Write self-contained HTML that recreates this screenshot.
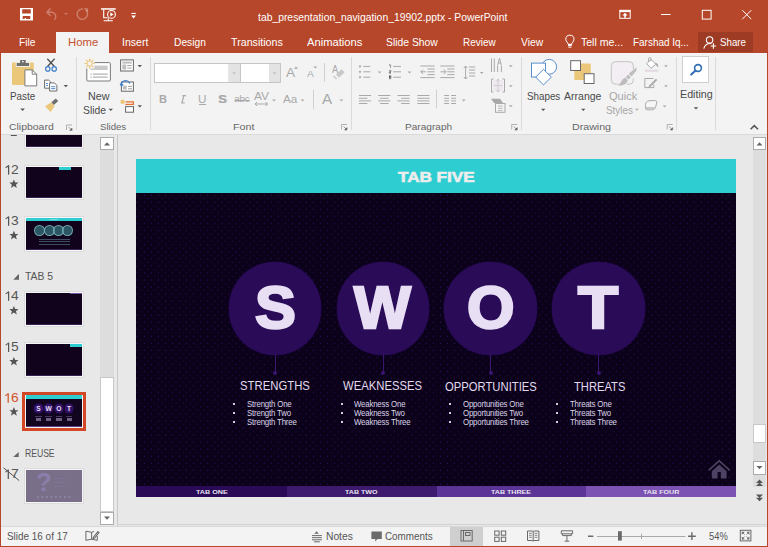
<!DOCTYPE html>
<html><head><meta charset="utf-8">
<style>
*{margin:0;padding:0;box-sizing:border-box}
html,body{width:768px;height:547px;overflow:hidden;background:#B7472A;font-family:"Liberation Sans",sans-serif;position:relative}
.a{position:absolute}
.t{position:absolute;white-space:nowrap;font-family:"Liberation Sans",sans-serif}
svg{overflow:visible}

</style></head><body>
<div class="a" style="left:0px;top:0px;width:768px;height:53px;background:#B7472A"></div>
<div class="a" style="left:1px;top:53px;width:766px;height:81px;background:#F3F3F3"></div>
<div class="a" style="left:1px;top:134px;width:766px;height:1px;background:#DADADA"></div>
<div class="a" style="left:1px;top:135px;width:766px;height:391px;background:#E8E8E8"></div>
<div class="a" style="left:1px;top:526px;width:766px;height:1px;background:#D8D8D8"></div>
<div class="a" style="left:1px;top:527px;width:766px;height:19px;background:#F3F3F3"></div>
<span class="t" style="left:257.79px;top:12.87px;font-size:10.2px;line-height:10.2px;color:#FFFFFF;font-weight:400;letter-spacing:0px;transform:scaleX(1.0166);transform-origin:0 0;">tab_presentation_navigation_19902.pptx - PowerPoint</span>
<div class="a" style="left:56px;top:32px;width:53px;height:22px;background:#F3F3F3"></div>
<span class="t" style="left:18.59px;top:37.03px;font-size:11.3px;line-height:11.3px;color:#FFFFFF;font-weight:400;letter-spacing:0px;transform:scaleX(0.9018);transform-origin:0 0;">File</span>
<span class="t" style="left:67.55px;top:37.03px;font-size:11.3px;line-height:11.3px;color:#C4502F;font-weight:400;letter-spacing:0px;transform:scaleX(1.0022);transform-origin:0 0;">Home</span>
<span class="t" style="left:122.08px;top:37.03px;font-size:11.3px;line-height:11.3px;color:#FFFFFF;font-weight:400;letter-spacing:0px;transform:scaleX(0.9320);transform-origin:0 0;">Insert</span>
<span class="t" style="left:173.59px;top:37.03px;font-size:11.3px;line-height:11.3px;color:#FFFFFF;font-weight:400;letter-spacing:0px;transform:scaleX(0.9046);transform-origin:0 0;">Design</span>
<span class="t" style="left:230.57px;top:37.03px;font-size:11.3px;line-height:11.3px;color:#FFFFFF;font-weight:400;letter-spacing:0px;transform:scaleX(0.9455);transform-origin:0 0;">Transitions</span>
<span class="t" style="left:306.75px;top:37.03px;font-size:11.3px;line-height:11.3px;color:#FFFFFF;font-weight:400;letter-spacing:0px;transform:scaleX(0.9912);transform-origin:0 0;">Animations</span>
<span class="t" style="left:386.49px;top:37.03px;font-size:11.3px;line-height:11.3px;color:#FFFFFF;font-weight:400;letter-spacing:0px;transform:scaleX(0.9168);transform-origin:0 0;">Slide Show</span>
<span class="t" style="left:463.10px;top:37.03px;font-size:11.3px;line-height:11.3px;color:#FFFFFF;font-weight:400;letter-spacing:0px;transform:scaleX(0.8798);transform-origin:0 0;">Review</span>
<span class="t" style="left:520.59px;top:37.03px;font-size:11.3px;line-height:11.3px;color:#FFFFFF;font-weight:400;letter-spacing:0px;transform:scaleX(0.9105);transform-origin:0 0;">View</span>
<span class="t" style="left:580.58px;top:37.03px;font-size:11.3px;line-height:11.3px;color:#FFFFFF;font-weight:400;letter-spacing:0px;transform:scaleX(0.9323);transform-origin:0 0;">Tell me...</span>
<span class="t" style="left:633.30px;top:37.03px;font-size:11.3px;line-height:11.3px;color:#FFFFFF;font-weight:400;letter-spacing:0px;transform:scaleX(0.8797);transform-origin:0 0;">Farshad Iq...</span>
<div class="a" style="left:698px;top:32px;width:55px;height:20px;background:#9E3B24"></div>
<span class="t" style="left:720.41px;top:37.03px;font-size:11.3px;line-height:11.3px;color:#FFFFFF;font-weight:400;letter-spacing:0px;transform:scaleX(0.8615);transform-origin:0 0;">Share</span>
<svg class="a" style="left:0;top:0" width="768" height="53" viewBox="0 0 768 53"><path fill="#fff" fill-rule="evenodd" d="M20 8H33V20.5H20Z M22.2 9.2V13.4H30.8V9.2Z M22.7 15.9V19H30.3V15.9Z"/><rect x="24.7" y="18" width="1.4" height="1" fill="#fff"/><g stroke="#fff" stroke-opacity="0.3" stroke-width="1.5" fill="none" stroke-linecap="round"><path d="M46.8 12.2L50.2 8.9M46.8 12.2L50.2 15.5M46.8 12.2H52.2A4.6 4.4 0 0 1 54.8 19.2"/><path d="M82.4 8.9A5.2 5.2 0 1 0 86.2 10.6"/></g><path fill="#fff" fill-opacity="0.3" d="M64 13H67.8L65.9 15Z"/><path fill="#fff" fill-opacity="0.3" d="M83.5 8.2H88.2V12.6Z"/><rect x="101" y="8.2" width="14.7" height="1.5" fill="#fff"/><g stroke="#fff" stroke-width="1.1" fill="none"><path d="M103.7 9.5V17.8H107.5"/><circle cx="111.5" cy="14.4" r="3.9"/><path d="M108.3 18.3V20.5M103.7 20.7H112.8"/></g><path fill="#fff" d="M110.3 12.3L113.6 14.4L110.3 16.5Z"/><rect x="131.4" y="12.9" width="4.4" height="1.1" fill="#fff"/><path fill="#fff" d="M131.2 15.4H136L133.6 18.4Z"/><g stroke="#fff" stroke-width="1" fill="none"><rect x="619.8" y="10.3" width="10.4" height="8"/><path d="M661 14.5H670.5"/><rect x="702.3" y="10.3" width="8.8" height="8.8"/><path d="M742.3 10.2L751.3 19.2M751.3 10.2L742.3 19.2"/></g><rect x="619.8" y="10.3" width="10.4" height="1.8" fill="#fff"/><path fill="#fff" d="M625 12.8L627.6 15.4H625.8V17.8H624.2V15.4H622.4Z"/><g stroke="#fff" stroke-width="1" fill="none"><path d="M568.2 44.3C568.2 42.6 565.8 41.7 565.8 39.3A4.1 4.1 0 0 1 574 39.3C574 41.7 571.6 42.6 571.6 44.3Z"/><path d="M568.3 47.1H571.5"/></g><rect x="568" y="44" width="3.8" height="1.9" fill="#fff"/><g stroke="#fff" stroke-width="1.1" fill="none"><circle cx="709.6" cy="39.9" r="3.2"/><path d="M703.8 48.6A6.3 6.3 0 0 1 711.2 43.6"/><path d="M713.4 43.3V48.7M710.7 46H716.1"/></g></svg>
<svg class="a" style="left:0;top:0" width="768" height="140" viewBox="0 0 768 140"><rect x="12" y="62.5" width="21.8" height="22.4" rx="1.2" fill="#EBC77A"/><path fill="#F3F3F3" d="M15.7 62.5H30.1V66.9H15.7Z"/><path fill="#6E6E6E" d="M16.7 63.1H29.1V65.9H16.7Z M20.1 60H25.7V63.2H20.1Z"/><circle cx="22.9" cy="61.6" r="0.9" fill="#F3F3F3"/><path fill="#fff" stroke="#7A7A7A" stroke-width="1" d="M24.9 69.9H32.2L36.7 74.2V85.9H24.9Z"/><path fill="none" stroke="#7A7A7A" stroke-width="1" d="M32.2 69.9V74.2H36.7"/><path fill="#555" d="M20.3 108.6H24.900000000000002L22.6 111.0Z"/><path stroke="#505050" stroke-width="1.3" d="M47.3 58.8L54.6 66.8M54.6 58.8L47.3 66.8"/><g fill="none" stroke="#3E7EC8" stroke-width="1.2"><circle cx="47.8" cy="68.9" r="2.2"/><circle cx="54.2" cy="68.9" r="2.2"/></g><path fill="#fff" stroke="#6A6A6A" stroke-width="1" d="M44.6 80.1H48.6L50.6 82V88.2H44.6Z"/><path fill="#fff" stroke="#6A6A6A" stroke-width="1" d="M49.6 82.9H54.4L56.9 85.4V91H49.6Z"/><g stroke="#3E7EC8" stroke-width="0.9"><path d="M46 83.5H48M46 85.5H48M51.2 86.7H55.3M51.2 88.6H55.3"/></g><path fill="#555" d="M63.599999999999994 84.9H68.0L65.8 87.2Z"/><path fill="#6E6E6E" d="M51.3 102.3L55.8 98.4L58.2 100.9L53.9 104.9Z"/><path fill="#EBC77A" d="M45 106.2L51.1 102.6L54.6 106.2L50.6 112Z"/><path fill="none" stroke="#A0A0A0" stroke-width="0.8" d="M66.5 130V125H72.0"/><path stroke="#909090" stroke-width="0.9" d="M68.5 127L72.0 130.5M72.0 128V130.5H69.5"/><path fill="none" stroke="#A0A0A0" stroke-width="0.8" d="M341.5 129.5V124.5H347.0"/><path stroke="#909090" stroke-width="0.9" d="M343.5 126.5L347.0 130.0M347.0 127.5V130.0H344.5"/><path fill="none" stroke="#A0A0A0" stroke-width="0.8" d="M511.7 129.5V124.5H517.2"/><path stroke="#909090" stroke-width="0.9" d="M513.7 126.5L517.2 130.0M517.2 127.5V130.0H514.7"/><path fill="none" stroke="#A0A0A0" stroke-width="0.8" d="M667.2 129.5V124.5H672.7"/><path stroke="#909090" stroke-width="0.9" d="M669.2 126.5L672.7 130.0M672.7 127.5V130.0H670.2"/><rect x="86.8" y="62.6" width="23.6" height="18.4" rx="1" fill="#fff" stroke="#7A7A7A" stroke-width="1"/><rect x="90.4" y="65.6" width="17.3" height="4.4" fill="#C9C9C9"/><path stroke="#8A8A8A" stroke-width="0.8" d="M90.4 74.1H91.8M93 74.1H107.7M90.4 77.1H91.8M93 77.1H107.7"/><rect x="84.5" y="58.5" width="10" height="10" fill="#F3F3F3"/><g stroke="#EBC77A" stroke-width="1.2"><path d="M89.6 58.4V68.6M84.5 63.5H94.7M86 59.9L93.2 67.1M93.2 59.9L86 67.1"/></g><circle cx="89.6" cy="63.5" r="2.6" fill="#F3F3F3"/><circle cx="89.6" cy="63.5" r="2.6" fill="none" stroke="#EBC77A" stroke-width="1"/><path fill="#555" d="M108.6 108.7H113.0L110.8 111.0Z"/><rect x="120.6" y="59.9" width="12.8" height="11.1" fill="#fff" stroke="#666" stroke-width="1"/><rect x="122.3" y="61.6" width="9.4" height="2" fill="#BDBDBD"/><rect x="122.3" y="64.5" width="3.8" height="5" fill="#BDBDBD"/><path stroke="#888" stroke-width="0.8" d="M127.2 65.5H131.7M127.2 68H131.7"/><path fill="#555" d="M137.60000000000002 64.9H142.0L139.8 67.2Z"/><rect x="121.4" y="82" width="12" height="9.2" fill="#fff" stroke="#666" stroke-width="1"/><rect x="122.9" y="85.6" width="3.8" height="4" fill="#BDBDBD"/><path stroke="#888" stroke-width="0.8" d="M128 86.4H132M128 88.8H132"/><path fill="none" stroke="#3E7EC8" stroke-width="1.3" d="M121.4 85.6A4.3 3.8 0 0 1 129.8 83.6"/><path fill="#3E7EC8" d="M119.6 83.6L123.6 84.1L121.5 87.2Z"/><circle cx="122.6" cy="101.7" r="2.3" fill="#EBC77A"/><path fill="none" stroke="#E5732A" stroke-width="1.2" d="M125.6 101.8H133.4V104.4"/><path stroke="#E5732A" stroke-width="1.2" d="M125.3 104.4H133.9"/><rect x="125.6" y="106.6" width="7.9" height="5.6" fill="#fff" stroke="#666" stroke-width="1"/><path fill="#555" d="M137.60000000000002 105.2H142.0L139.8 107.5Z"/><rect x="154.5" y="63.5" width="86" height="19" fill="#fff" stroke="#C6C6C6" stroke-width="1"/><rect x="228.2" y="64" width="11.8" height="18" fill="#E3E3E3"/><rect x="240.5" y="63.5" width="40" height="19" fill="#fff" stroke="#C6C6C6" stroke-width="1"/><rect x="269" y="64" width="11" height="18" fill="#E3E3E3"/><path fill="#B8B8B8" d="M232.29999999999998 72.4H235.9L234.1 74.30000000000001Z"/><path fill="#B8B8B8" d="M272.7 72.4H276.3L274.5 74.30000000000001Z"/><path stroke="#D0D0D0" stroke-width="1" d="M324.5 63V81.7M313.5 89.7V109.2M436.5 89.7V108.5"/><path fill="#A9A9A9" d="M293.9 68.8L296 66.4L298.1 68.8Z M313.3 66.4H317.4L315.35 68.6Z"/><path fill="#C8C8C8" d="M336 74.5L341.5 69.2L344.6 72.3L339.1 77.6Z"/><path stroke="#C8C8C8" stroke-width="1.4" d="M333.6 75.9L336.6 78.9"/><g fill="#A9A9A9"><circle cx="360" cy="66.4" r="1.1"/><circle cx="360" cy="71.8" r="1.1"/><circle cx="360" cy="77.2" r="1.1"/></g><g stroke="#A9A9A9" stroke-width="1"><path d="M363.3 66.4H370.3M363.3 71.8H370.3M363.3 77.2H370.3"/><path d="M393.2 66.4H401M393.2 71.8H401M393.2 77.2H401"/><path d="M389.4 64.8H390.6V68M389.2 70.3H391V71.8H389.2V73.3H391M389.2 75.6H391V78.8H389.2M389.4 77.2H391"/><path d="M420.3 66H434.7M427.5 69H434.7M427.5 71.8H434.7M427.5 74.6H434.7M420.3 77.6H434.7M420.8 71.8H426M420.8 71.8L423 69.6M420.8 71.8L423 74"/><path d="M440.3 66H454.5M447.3 69H454.5M447.3 71.8H454.5M447.3 74.6H454.5M440.3 77.6H454.5M440.5 71.8H446M446 71.8L443.8 69.6M446 71.8L443.8 74"/><path d="M469 67H475.2M469 70H475.2M469 73H475.2M469 76H475.2M465.6 66V79M465.6 66L463.8 68M465.6 66L467.4 68M465.6 79L463.8 77M465.6 79L467.4 77"/></g><path fill="#A9A9A9" d="M377.70000000000005 71.6H381.5L379.6 73.6Z"/><path fill="#A9A9A9" d="M407.6 71.6H411.4L409.5 73.6Z"/><path fill="#A9A9A9" d="M479.8 72H483.59999999999997L481.7 74Z"/><path stroke="#A9A9A9" stroke-width="1" d="M358.9 95.5H371.1M358.9 98.3H367.4M358.9 100.9H371.1M358.9 103.5H367.4"/><path stroke="#A9A9A9" stroke-width="1" d="M378.2 95.5H390.4M380.1 98.3H388.6M378.2 100.9H390.4M380.1 103.5H388.6"/><path stroke="#A9A9A9" stroke-width="1" d="M397.5 95.5H409.7M401.2 98.3H409.7M397.5 100.9H409.7M401.2 103.5H409.7"/><path stroke="#A9A9A9" stroke-width="1" d="M417.3 95.5H429.5M417.3 98.3H429.5M417.3 100.9H429.5M417.3 103.5H429.5"/><path stroke="#A9A9A9" stroke-width="1" d="M444.2 95.5H449M444.2 98.3H449M444.2 100.9H449M444.2 103.5H449M451.2 95.5H456M451.2 98.3H456M451.2 100.9H456M451.2 103.5H456"/><path fill="#A9A9A9" d="M461.8 99.6H465.59999999999997L463.7 101.6Z"/><g stroke="#A9A9A9" stroke-width="1" fill="none"><path d="M491.5 58.5V72M494.3 58.5V72M497.6 66V72M501.4 66V72"/><path d="M497.6 65.5L499.5 58.2L501.4 65.5M498.2 63H500.8"/><path d="M491.5 79H493.5M491.5 79V92M491.5 92H493.5M504.5 79H502.5M504.5 79V92M504.5 92H502.5"/><path d="M498 79.5V91.5M496 81.5L498 79.5L500 81.5M496 89.5L498 91.5L500 89.5M494 85.5H502"/></g><rect x="493" y="80" width="10" height="11" fill="#EDE4EC" opacity="0.6"/><path fill="#A9A9A9" d="M491 98.7H500L503 103H494Z"/><rect x="495.5" y="103.5" width="9.5" height="8.8" fill="#F4F4F4" stroke="#A9A9A9" stroke-width="1"/><path stroke="#A9A9A9" stroke-width="0.8" d="M498 106H502.5M498 108.3H502.5M498 110.5H502.5"/><path fill="#A9A9A9" d="M508.90000000000003 65.2H512.7L510.8 67.2Z"/><path fill="#A9A9A9" d="M508.90000000000003 85.2H512.7L510.8 87.2Z"/><path fill="#A9A9A9" d="M508.90000000000003 105.3H512.7L510.8 107.3Z"/><circle cx="549.2" cy="66.8" r="7.4" fill="#fff" stroke="#5A8ECB" stroke-width="1"/><rect x="531.5" y="63.1" width="14" height="13.9" fill="#fff" stroke="#5A8ECB" stroke-width="1"/><path fill="#fff" stroke="#5A8ECB" stroke-width="1" d="M543.5 69.3L551.3 77.1L543.5 84.9L535.7 77.1Z"/><path fill="#555" d="M541.0 108.8H545.4000000000001L543.2 111.1Z"/><rect x="574.3" y="63.5" width="16.5" height="16.5" fill="#EBC77A"/><rect x="570.7" y="60.7" width="9.8" height="9.8" fill="#fff" stroke="#666" stroke-width="1"/><rect x="584.2" y="73.7" width="9.8" height="9.8" fill="#fff" stroke="#666" stroke-width="1"/><path fill="#555" d="M581.0999999999999 108.8H585.5L583.3 111.1Z"/><rect x="611.3" y="61.7" width="22" height="22.5" rx="4" fill="#F3EEF3" stroke="#C4C4C4" stroke-width="1"/><path fill="#F3F3F3" d="M616 86.5L636.5 66V86.5Z" opacity="0.9"/><path fill="#BDBDBD" d="M636.5 67.2V70.5L631.5 76.5L628.8 73.8Z M628.2 74.5L630.8 77.2L628.5 79.6L625.8 76.9Z M625.2 77.5L627.9 80.2Q626.5 84.5 621.5 85.5H617.6Q619.5 85 621 81.8Q622.3 78.8 625.2 77.5Z"/><path fill="none" stroke="#C4C4C4" stroke-width="1" d="M633.3 78.5V80.2A4 4 0 0 1 629.3 84.2H627"/><path fill="#A9A9A9" d="M635.0 108.8H638.8L636.9 110.8Z"/><path fill="#fff" stroke="#A9A9A9" stroke-width="1" d="M646.5 63.5L651.3 59.6L655.8 64.3L651 68.3Z"/><path fill="none" stroke="#A9A9A9" stroke-width="1" d="M648.6 61.8V58.8A1.2 1.2 0 0 1 651 58.8V61"/><path fill="#A9A9A9" d="M655.2 62.2Q658.8 63.8 658.3 67.2Q656.2 66.5 655.8 64.3Z"/><rect x="645" y="69.6" width="13.5" height="2.2" fill="#E4DAE2"/><path fill="none" stroke="#A9A9A9" stroke-width="1" d="M653.5 78.5H644.8V87.6H653.8V84.5"/><path stroke="#A9A9A9" stroke-width="2" d="M649.6 86.4L656.6 79.4"/><path fill="#A9A9A9" d="M648.4 88L648.9 85.4L650.6 87.1Z"/><path fill="#F6F6F6" stroke="#A9A9A9" stroke-width="1" d="M645.5 104.5Q645.5 102.5 647.5 101.2L650 100.6H655.5Q657 100.8 656.8 102.5L655.5 107.5Q654.8 109.6 652.5 109.8H647Q645.5 109.6 645.5 108Z"/><path fill="#C8C8C8" d="M645.7 107H655L654.6 108.5Q654 109.5 652.5 109.6H647Q645.8 109.4 645.7 108Z"/><path fill="#A9A9A9" d="M664.1 65.3H667.9L666 67.3Z"/><path fill="#A9A9A9" d="M664.1 85.3H667.9L666 87.3Z"/><path fill="#A9A9A9" d="M662.7 105.5H666.5L664.6 107.5Z"/><rect x="682.5" y="56.5" width="26" height="26" fill="#fff" stroke="#CFCFCF" stroke-width="1"/><circle cx="698" cy="68" r="3.4" fill="none" stroke="#2F6DB5" stroke-width="1.6"/><path stroke="#2F6DB5" stroke-width="2" stroke-linecap="round" d="M695.6 70.5L691.2 74.6"/><path fill="#555" d="M693.8 107.3H698.2L696 109.6Z"/><path fill="none" stroke="#555" stroke-width="1.5" d="M750.6 129.3L754.3 125.6L758 129.3"/></svg>
<span class="t" style="left:159.26px;top:93.55px;font-size:11.4px;line-height:11.4px;color:#A9A9A9;font-weight:700;letter-spacing:0px;transform:scaleX(0.9696);transform-origin:0 0;">B</span>
<svg class="a" style="left:0;top:0" width="200" height="110"><path fill="none" stroke="#A9A9A9" stroke-width="1.2" d="M183.8 95.6L182 103M181.2 103H184.8M182.5 95.6H186"/></svg>
<span class="t" style="left:198.23px;top:93.55px;font-size:11.4px;line-height:11.4px;color:#A9A9A9;font-weight:400;letter-spacing:0px;transform:scaleX(1.0243);transform-origin:0 0;">U</span>
<div class="a" style="left:198.7px;top:104px;width:7.6px;height:1px;background:#A9A9A9"></div>
<span class="t" style="left:219.49px;top:93.95px;font-size:11.4px;line-height:11.4px;color:#C8C8C8;font-weight:700;letter-spacing:0px;transform:scaleX(1.1198);transform-origin:0 0;">S</span>
<span class="t" style="left:218.49px;top:93.55px;font-size:11.4px;line-height:11.4px;color:#A9A9A9;font-weight:700;letter-spacing:0px;transform:scaleX(1.1198);transform-origin:0 0;">S</span>
<span class="t" style="left:234.29px;top:95.38px;font-size:9px;line-height:9px;color:#A9A9A9;font-weight:400;letter-spacing:-0.4px;transform:scaleX(1.1356);transform-origin:0 0;">abc</span>
<div class="a" style="left:234.5px;top:100px;width:15px;height:1px;background:#A9A9A9"></div>
<span class="t" style="left:253.72px;top:91.80px;font-size:10.4px;line-height:10.4px;color:#A9A9A9;font-weight:400;letter-spacing:0px;transform:scaleX(1.1499);transform-origin:0 0;">AV</span>
<svg class="a" style="left:0;top:0" width="768" height="140"><path fill="none" stroke="#A9A9A9" stroke-width="1" d="M255 104H267.6M257 102L255 104L257 106M265.6 102L267.6 104L265.6 106"/><path fill="#A9A9A9" d="M272.1 99.6H275.9L274 101.6Z"/><path fill="#A9A9A9" d="M300.70000000000005 99.6H304.5L302.6 101.6Z"/><path fill="#A9A9A9" d="M339.5 99.6H343.29999999999995L341.4 101.6Z"/></svg>
<span class="t" style="left:282.53px;top:93.65px;font-size:11.4px;line-height:11.4px;color:#A9A9A9;font-weight:400;letter-spacing:0px;transform:scaleX(1.0288);transform-origin:0 0;">Aa</span>
<span class="t" style="left:322.39px;top:92.23px;font-size:14.2px;line-height:14.2px;color:#A9A9A9;font-weight:400;letter-spacing:0px;transform:scaleX(1.0681);transform-origin:0 0;">A</span>
<span class="t" style="left:286.26px;top:66.76px;font-size:12.8px;line-height:12.8px;color:#A9A9A9;font-weight:400;letter-spacing:0px;transform:scaleX(1.0634);transform-origin:0 0;">A</span>
<span class="t" style="left:306.79px;top:69.30px;font-size:9.8px;line-height:9.8px;color:#A9A9A9;font-weight:400;letter-spacing:0px;transform:scaleX(1.0585);transform-origin:0 0;">A</span>
<span class="t" style="left:331.63px;top:64.53px;font-size:10px;line-height:10px;color:#A9A9A9;font-weight:400;letter-spacing:0px;transform:scaleX(0.9196);transform-origin:0 0;">A</span>
<span class="t" style="left:8.88px;top:121.82px;font-size:9.9px;line-height:9.9px;color:#666666;font-weight:400;letter-spacing:0px;transform:scaleX(1.0581);transform-origin:0 0;">Clipboard</span>
<span class="t" style="left:99.61px;top:121.82px;font-size:9.9px;line-height:9.9px;color:#666666;font-weight:400;letter-spacing:0px;transform:scaleX(0.9726);transform-origin:0 0;">Slides</span>
<span class="t" style="left:232.67px;top:121.82px;font-size:9.9px;line-height:9.9px;color:#666666;font-weight:400;letter-spacing:0px;transform:scaleX(1.0857);transform-origin:0 0;">Font</span>
<span class="t" style="left:405.30px;top:121.82px;font-size:9.9px;line-height:9.9px;color:#666666;font-weight:400;letter-spacing:0px;transform:scaleX(1.0213);transform-origin:0 0;">Paragraph</span>
<span class="t" style="left:572.07px;top:121.82px;font-size:9.9px;line-height:9.9px;color:#666666;font-weight:400;letter-spacing:0px;transform:scaleX(1.0778);transform-origin:0 0;">Drawing</span>
<span class="t" style="left:10.41px;top:91.98px;font-size:10.3px;line-height:10.3px;color:#4A4A4A;font-weight:400;letter-spacing:0px;transform:scaleX(0.9561);transform-origin:0 0;">Paste</span>
<span class="t" style="left:88.27px;top:91.98px;font-size:10.3px;line-height:10.3px;color:#4A4A4A;font-weight:400;letter-spacing:0px;transform:scaleX(1.0412);transform-origin:0 0;">New</span>
<span class="t" style="left:83.39px;top:106.18px;font-size:10.3px;line-height:10.3px;color:#4A4A4A;font-weight:400;letter-spacing:0px;transform:scaleX(1.0053);transform-origin:0 0;">Slide</span>
<span class="t" style="left:526.81px;top:91.98px;font-size:10.3px;line-height:10.3px;color:#4A4A4A;font-weight:400;letter-spacing:0px;transform:scaleX(0.9527);transform-origin:0 0;">Shapes</span>
<span class="t" style="left:564.28px;top:91.98px;font-size:10.3px;line-height:10.3px;color:#4A4A4A;font-weight:400;letter-spacing:0px;transform:scaleX(1.0219);transform-origin:0 0;">Arrange</span>
<span class="t" style="left:608.86px;top:91.98px;font-size:10.3px;line-height:10.3px;color:#A6A6A6;font-weight:400;letter-spacing:0px;transform:scaleX(1.0743);transform-origin:0 0;">Quick</span>
<span class="t" style="left:605.60px;top:106.18px;font-size:10.3px;line-height:10.3px;color:#A6A6A6;font-weight:400;letter-spacing:0px;transform:scaleX(0.9624);transform-origin:0 0;">Styles</span>
<span class="t" style="left:679.87px;top:90.48px;font-size:10.3px;line-height:10.3px;color:#4A4A4A;font-weight:400;letter-spacing:0px;transform:scaleX(1.0404);transform-origin:0 0;">Editing</span>
<div class="a" style="left:76px;top:57px;width:1px;height:73px;background:#DADADA"></div>
<div class="a" style="left:150px;top:57px;width:1px;height:73px;background:#DADADA"></div>
<div class="a" style="left:351px;top:57px;width:1px;height:73px;background:#DADADA"></div>
<div class="a" style="left:521px;top:57px;width:1px;height:73px;background:#DADADA"></div>
<div class="a" style="left:676px;top:57px;width:1px;height:73px;background:#DADADA"></div>
<div class="a" style="left:715px;top:57px;width:1px;height:73px;background:#DADADA"></div>
<div class="a" style="left:100px;top:137px;width:14px;height:388px;background:#DDDDDD"></div>
<div class="a" style="left:117px;top:135px;width:1px;height:391px;background:#C8C8C8"></div>
<div class="a" style="left:24px;top:135px;width:60px;height:14px;background:#DCDCDC"></div>
<div class="a" style="left:25px;top:135px;width:58px;height:13px;background:#F6F6F6"></div>
<div class="a" style="left:26px;top:135px;width:56px;height:12px;background:#10031B"></div>
<div class="a" style="left:24px;top:165px;width:60px;height:35px;background:#DCDCDC"></div>
<div class="a" style="left:25px;top:166px;width:58px;height:33px;background:#F6F6F6"></div>
<div class="a" style="left:26px;top:167px;width:56px;height:31px;background:#10031B"></div>
<div class="a" style="left:24px;top:215.5px;width:60px;height:36.5px;background:#DCDCDC"></div>
<div class="a" style="left:25px;top:216.5px;width:58px;height:34.5px;background:#F6F6F6"></div>
<div class="a" style="left:26px;top:217.5px;width:56px;height:32.5px;background:#10031B"></div>
<div class="a" style="left:24px;top:291px;width:60px;height:36px;background:#DCDCDC"></div>
<div class="a" style="left:25px;top:292px;width:58px;height:34px;background:#F6F6F6"></div>
<div class="a" style="left:26px;top:293px;width:56px;height:32px;background:#10031B"></div>
<div class="a" style="left:24px;top:342px;width:60px;height:35.7px;background:#DCDCDC"></div>
<div class="a" style="left:25px;top:343px;width:58px;height:33.7px;background:#F6F6F6"></div>
<div class="a" style="left:26px;top:344px;width:56px;height:31.7px;background:#10031B"></div>
<svg class="a" style="left:0;top:0" width="30" height="547"><path fill="none" stroke="#555555" stroke-width="1.25" d="M8.6 174.6V165.4"/><path fill="none" stroke="#555555" stroke-width="1.1" d="M8.8 165.5L5.7 167.7"/></svg>
<span class="t" style="left:11.05px;top:163.09px;font-size:13.6px;line-height:13.6px;color:#555555;font-weight:400;letter-spacing:0px;transform:scaleX(1.0194);transform-origin:0 0;">2</span>
<svg class="a" style="left:0;top:0" width="30" height="547"><path fill="none" stroke="#555555" stroke-width="1.25" d="M8.6 225.8V216.60000000000002"/><path fill="none" stroke="#555555" stroke-width="1.1" d="M8.8 216.70000000000002L5.7 218.9"/></svg>
<span class="t" style="left:11.05px;top:214.29px;font-size:13.6px;line-height:13.6px;color:#555555;font-weight:400;letter-spacing:0px;transform:scaleX(1.0194);transform-origin:0 0;">3</span>
<svg class="a" style="left:0;top:0" width="30" height="547"><path fill="none" stroke="#555555" stroke-width="1.25" d="M8.6 300.8V291.6"/><path fill="none" stroke="#555555" stroke-width="1.1" d="M8.8 291.7L5.7 293.90000000000003"/></svg>
<span class="t" style="left:11.05px;top:289.29px;font-size:13.6px;line-height:13.6px;color:#555555;font-weight:400;letter-spacing:0px;transform:scaleX(1.0194);transform-origin:0 0;">4</span>
<svg class="a" style="left:0;top:0" width="30" height="547"><path fill="none" stroke="#555555" stroke-width="1.25" d="M8.6 352V342.8"/><path fill="none" stroke="#555555" stroke-width="1.1" d="M8.8 342.9L5.7 345.1"/></svg>
<span class="t" style="left:11.05px;top:340.49px;font-size:13.6px;line-height:13.6px;color:#555555;font-weight:400;letter-spacing:0px;transform:scaleX(1.0194);transform-origin:0 0;">5</span>
<svg class="a" style="left:0;top:0" width="30" height="547"><path fill="none" stroke="#D0532E" stroke-width="1.25" d="M8.2 402.7V393.5"/><path fill="none" stroke="#D0532E" stroke-width="1.1" d="M8.399999999999999 393.59999999999997L5.3 395.8"/></svg>
<span class="t" style="left:10.65px;top:391.19px;font-size:13.6px;line-height:13.6px;color:#D0532E;font-weight:400;letter-spacing:0px;transform:scaleX(1.0194);transform-origin:0 0;">6</span>
<span class="t" style="left:25.38px;top:270.93px;font-size:11.3px;line-height:11.3px;color:#555555;font-weight:400;letter-spacing:0px;transform:scaleX(0.9205);transform-origin:0 0;">TAB 5</span>
<span class="t" style="left:25.26px;top:448.23px;font-size:11.3px;line-height:11.3px;color:#555555;font-weight:400;letter-spacing:0px;transform:scaleX(0.7602);transform-origin:0 0;">REUSE</span>
<svg class="a" style="left:0;top:0" width="768" height="547"><rect x="100.5" y="137.5" width="13" height="12" fill="#fff" stroke="#ABABAB" stroke-width="1"/><path fill="#666" d="M104 145.5H110L107 142.3Z"/><rect x="100.5" y="377.5" width="13" height="134" fill="#fff" stroke="#C8C8C8" stroke-width="1"/><rect x="100.5" y="512.5" width="13" height="12" fill="#fff" stroke="#ABABAB" stroke-width="1"/><path fill="#666" d="M104 516.5H110L107 519.7Z"/><path fill="#555" transform="translate(13.9 184) scale(0.88)" d="M0 -5.2L1.5 -1.6L5.2 -1.6L2.3 0.8L3.3 4.6L0 2.4L-3.3 4.6L-2.3 0.8L-5.2 -1.6L-1.5 -1.6Z"/><path fill="#555" transform="translate(13.9 235.4) scale(0.88)" d="M0 -5.2L1.5 -1.6L5.2 -1.6L2.3 0.8L3.3 4.6L0 2.4L-3.3 4.6L-2.3 0.8L-5.2 -1.6L-1.5 -1.6Z"/><path fill="#555" transform="translate(13.9 310.5) scale(0.88)" d="M0 -5.2L1.5 -1.6L5.2 -1.6L2.3 0.8L3.3 4.6L0 2.4L-3.3 4.6L-2.3 0.8L-5.2 -1.6L-1.5 -1.6Z"/><path fill="#555" transform="translate(13.9 361.5) scale(0.88)" d="M0 -5.2L1.5 -1.6L5.2 -1.6L2.3 0.8L3.3 4.6L0 2.4L-3.3 4.6L-2.3 0.8L-5.2 -1.6L-1.5 -1.6Z"/><path fill="#555" transform="translate(13.9 411.6) scale(0.88)" d="M0 -5.2L1.5 -1.6L5.2 -1.6L2.3 0.8L3.3 4.6L0 2.4L-3.3 4.6L-2.3 0.8L-5.2 -1.6L-1.5 -1.6Z"/><path fill="#555" d="M11.2 135H16.4L17.2 135.9H10.4Z"/><path fill="#666" d="M19 273.8V279.7H13.3Z M18.7 452V457H13.2Z"/></svg>
<div class="a" style="left:26px;top:146px;width:56px;height:1px;background:#5A3E88;opacity:.55"></div>
<div class="a" style="left:59.4px;top:167px;width:11.2px;height:2.6px;background:#2ECDD1"></div>
<div class="a" style="left:26px;top:197.2px;width:56px;height:1px;background:#5A3E88;opacity:.55"></div>
<div class="a" style="left:26px;top:217.5px;width:56px;height:3.6px;background:#2ECDD1"></div>
<div class="a" style="left:50px;top:218.6px;width:8px;height:1px;background:#9EE8EA;opacity:.6"></div>
<div class="a" style="left:34.4px;top:225.4px;width:10.8px;height:10.8px;border-radius:50%;background:rgba(64,140,148,.6);border:1px solid rgba(140,195,200,.7)"></div>
<div class="a" style="left:44.300000000000004px;top:225.4px;width:10.8px;height:10.8px;border-radius:50%;background:rgba(64,140,148,.6);border:1px solid rgba(140,195,200,.7)"></div>
<div class="a" style="left:53.2px;top:225.4px;width:10.8px;height:10.8px;border-radius:50%;background:rgba(64,140,148,.6);border:1px solid rgba(140,195,200,.7)"></div>
<div class="a" style="left:62.1px;top:225.4px;width:10.8px;height:10.8px;border-radius:50%;background:rgba(64,140,148,.6);border:1px solid rgba(140,195,200,.7)"></div>
<div class="a" style="left:38.8px;top:239.4px;width:31.5px;height:0.6px;background:#5A7F90;opacity:.6"></div>
<div class="a" style="left:38.8px;top:241.3px;width:31.5px;height:0.6px;background:#5A7F90;opacity:.6"></div>
<div class="a" style="left:38.8px;top:243.6px;width:31.5px;height:0.6px;background:#5A7F90;opacity:.6"></div>
<div class="a" style="left:26px;top:249.2px;width:56px;height:1px;background:#5A3E88;opacity:.55"></div>
<div class="a" style="left:70.3px;top:293px;width:11.7px;height:1.2px;background:#8A6CC0;opacity:.8"></div>
<div class="a" style="left:26px;top:324px;width:56px;height:1px;background:#5A3E88;opacity:.55"></div>
<div class="a" style="left:70.3px;top:344px;width:11.7px;height:3px;background:#2ECDD1"></div>
<div class="a" style="left:26px;top:374.7px;width:56px;height:1px;background:#5A3E88;opacity:.55"></div>
<div class="a" style="left:22px;top:391.7px;width:63.6px;height:39px;background:#D24726"></div>
<div class="a" style="left:25px;top:394.5px;width:57.8px;height:33.4px;background:#F4F4F4"></div>
<div class="a" style="left:26px;top:395.4px;width:56px;height:31.6px;background:#12051F"></div>
<div class="a" style="left:26px;top:395.4px;width:56px;height:3.3px;background:#2ECDD1"></div>
<div class="a" style="left:34.0px;top:404.4px;width:8.8px;height:8.8px;border-radius:50%;background:#33136A;box-shadow:0 0 1.5px 0.5px #2A0F58"></div>
<span class="t" style="left:36.20px;top:405.71px;font-size:6.6px;line-height:6.6px;color:#E8DFF5;font-weight:700;letter-spacing:0px;">S</span>
<div class="a" style="left:35.0px;top:416.4px;width:6.8px;height:0.8px;background:#4A3A62"></div>
<div class="a" style="left:35.8px;top:418px;width:5.6px;height:3px;background:#7E7294;opacity:.85"></div>
<div class="a" style="left:44.1px;top:404.4px;width:8.8px;height:8.8px;border-radius:50%;background:#33136A;box-shadow:0 0 1.5px 0.5px #2A0F58"></div>
<span class="t" style="left:45.38px;top:405.71px;font-size:6.6px;line-height:6.6px;color:#E8DFF5;font-weight:700;letter-spacing:0px;">W</span>
<div class="a" style="left:45.1px;top:416.4px;width:6.8px;height:0.8px;background:#4A3A62"></div>
<div class="a" style="left:45.9px;top:418px;width:5.6px;height:3px;background:#7E7294;opacity:.85"></div>
<div class="a" style="left:54.5px;top:404.4px;width:8.8px;height:8.8px;border-radius:50%;background:#33136A;box-shadow:0 0 1.5px 0.5px #2A0F58"></div>
<span class="t" style="left:56.33px;top:405.71px;font-size:6.6px;line-height:6.6px;color:#E8DFF5;font-weight:700;letter-spacing:0px;">O</span>
<div class="a" style="left:55.5px;top:416.4px;width:6.8px;height:0.8px;background:#4A3A62"></div>
<div class="a" style="left:56.3px;top:418px;width:5.6px;height:3px;background:#7E7294;opacity:.85"></div>
<div class="a" style="left:64.69999999999999px;top:404.4px;width:8.8px;height:8.8px;border-radius:50%;background:#33136A;box-shadow:0 0 1.5px 0.5px #2A0F58"></div>
<span class="t" style="left:67.08px;top:405.71px;font-size:6.6px;line-height:6.6px;color:#E8DFF5;font-weight:700;letter-spacing:0px;">T</span>
<div class="a" style="left:65.69999999999999px;top:416.4px;width:6.8px;height:0.8px;background:#4A3A62"></div>
<div class="a" style="left:66.5px;top:418px;width:5.6px;height:3px;background:#7E7294;opacity:.85"></div>
<div class="a" style="left:25.6px;top:426.2px;width:56.7px;height:1px;background:#6A4A9A;opacity:.8"></div>
<div class="a" style="left:24px;top:468.2px;width:60px;height:35.7px;background:#DCDCDC"></div>
<div class="a" style="left:25px;top:469.2px;width:58px;height:33.7px;background:#F6F6F6"></div>
<div class="a" style="left:25.6px;top:470.2px;width:56.7px;height:31.7px;background:#7A6F88"></div>
<span class="t" style="left:36.46px;top:469.49px;font-size:26px;line-height:26px;color:#8A7EAA;font-weight:700;letter-spacing:0px;transform:scaleX(0.9992);transform-origin:0 0;">?</span>
<div class="a" style="left:54px;top:478px;width:12px;height:1.2px;background:#7F7596"></div>
<div class="a" style="left:54px;top:482px;width:12px;height:1.2px;background:#7F7596"></div>
<div class="a" style="left:54px;top:486px;width:9px;height:1.2px;background:#7F7596"></div>
<div class="a" style="left:37px;top:496px;width:34px;height:1.5px;background-image:linear-gradient(90deg,#8F86A8 50%,transparent 50%);background-size:4.5px 1.5px;opacity:.8"></div>
<svg class="a" style="left:0;top:0" width="30" height="547"><path fill="none" stroke="#555555" stroke-width="1.25" d="M8.3 479V469.8"/><path fill="none" stroke="#555555" stroke-width="1.1" d="M8.5 469.9L5.4 472.1"/></svg>
<span class="t" style="left:10.75px;top:467.49px;font-size:13.6px;line-height:13.6px;color:#555555;font-weight:400;letter-spacing:0px;transform:scaleX(1.0194);transform-origin:0 0;">7</span>
<svg class="a" style="left:0;top:0" width="30" height="490"><path stroke="#555" stroke-width="1" d="M3.5 467.8L19.2 480.6"/></svg>
<div class="a" style="left:753px;top:149px;width:13px;height:338px;background:#DDDDDD"></div>
<svg class="a" style="left:0;top:0" width="768" height="547"><rect x="753.5" y="137.5" width="12" height="12" fill="#fff" stroke="#ABABAB" stroke-width="1"/><path fill="#666" d="M756.5 145.5H762.5L759.5 142.3Z"/><rect x="753.5" y="424.5" width="12" height="18" fill="#fff" stroke="#C8C8C8" stroke-width="1"/><rect x="753.5" y="461.5" width="12" height="13" fill="#fff" stroke="#ABABAB" stroke-width="1"/><path fill="#666" d="M756.5 466H762.5L759.5 469.2Z"/><path fill="#555" d="M756 483H763L759.5 479.5Z M756 486H763L759.5 482.5Z M756 494.5H763L759.5 498Z M756 497.8H763L759.5 501.3Z"/></svg>
<div class="a" style="left:117px;top:524px;width:650px;height:1px;background:#D2D2D2"></div>
<svg class="a" style="left:136px;top:159px" width="600" height="338" viewBox="0 0 600 338"><defs><pattern id="dp" x="0" y="0" width="7.05" height="7.05" patternUnits="userSpaceOnUse"><circle cx="1.27" cy="1.12" r="0.6" fill="#2C1268"/><circle cx="4.8" cy="4.65" r="0.7" fill="#220E50" opacity="0.7"/></pattern></defs><rect width="600" height="338" fill="#0B0119"/><rect width="600" height="338" fill="url(#dp)"/></svg>
<div class="a" style="left:136px;top:159px;width:600px;height:34px;background:#2ECDD1"></div>
<span class="t" style="left:398.32px;top:169.94px;font-size:14.6px;line-height:14.6px;color:#EDEDED;font-weight:700;letter-spacing:0px;transform:scaleX(1.1706);transform-origin:0 0;-webkit-text-stroke:0.6px #EDEDED;">TAB FIVE</span>
<div class="a" style="left:228.9px;top:262px;width:92.6px;height:92.6px;border-radius:50%;background:#2A0B58;box-shadow:0 0 1.2px 0.3px #2A0B58"></div>
<div class="a" style="left:274.7px;top:354px;width:1px;height:18px;background:#3B1670"></div>
<div class="a" style="left:273.2px;top:371px;width:4px;height:4px;border-radius:50%;background:#3B1670"></div>
<div class="a" style="left:336.9px;top:262px;width:92.6px;height:92.6px;border-radius:50%;background:#2A0B58;box-shadow:0 0 1.2px 0.3px #2A0B58"></div>
<div class="a" style="left:382.7px;top:354px;width:1px;height:18px;background:#3B1670"></div>
<div class="a" style="left:381.2px;top:371px;width:4px;height:4px;border-radius:50%;background:#3B1670"></div>
<div class="a" style="left:444.3px;top:262px;width:92.6px;height:92.6px;border-radius:50%;background:#2A0B58;box-shadow:0 0 1.2px 0.3px #2A0B58"></div>
<div class="a" style="left:490.1px;top:354px;width:1px;height:18px;background:#3B1670"></div>
<div class="a" style="left:488.6px;top:371px;width:4px;height:4px;border-radius:50%;background:#3B1670"></div>
<div class="a" style="left:552.3px;top:262px;width:92.6px;height:92.6px;border-radius:50%;background:#2A0B58;box-shadow:0 0 1.2px 0.3px #2A0B58"></div>
<div class="a" style="left:598.1px;top:354px;width:1px;height:18px;background:#3B1670"></div>
<div class="a" style="left:596.6px;top:371px;width:4px;height:4px;border-radius:50%;background:#3B1670"></div>
<span class="t" style="left:254.75px;top:278.21px;font-size:60px;line-height:60px;color:#E8DFF5;font-weight:700;letter-spacing:0px;transform:scaleX(1.0218);transform-origin:0 0;-webkit-text-stroke:2.5px #E8DFF5;">S</span>
<span class="t" style="left:354.44px;top:278.21px;font-size:60px;line-height:60px;color:#E8DFF5;font-weight:700;letter-spacing:0px;transform:scaleX(1.0031);transform-origin:0 0;-webkit-text-stroke:2.5px #E8DFF5;">W</span>
<span class="t" style="left:466.56px;top:278.21px;font-size:60px;line-height:60px;color:#E8DFF5;font-weight:700;letter-spacing:0px;transform:scaleX(1.0174);transform-origin:0 0;-webkit-text-stroke:2.5px #E8DFF5;">O</span>
<span class="t" style="left:577.72px;top:278.21px;font-size:60px;line-height:60px;color:#E8DFF5;font-weight:700;letter-spacing:0px;transform:scaleX(1.0955);transform-origin:0 0;-webkit-text-stroke:2.5px #E8DFF5;">T</span>
<span class="t" style="left:240.05px;top:380.27px;font-size:12.2px;line-height:12.2px;color:#E2DAEE;font-weight:400;letter-spacing:0px;transform:scaleX(0.9300);transform-origin:0 0;">STRENGTHS</span>
<span class="t" style="left:343.45px;top:380.27px;font-size:12.2px;line-height:12.2px;color:#E2DAEE;font-weight:400;letter-spacing:0px;transform:scaleX(0.9269);transform-origin:0 0;">WEAKNESSES</span>
<span class="t" style="left:444.95px;top:381.07px;font-size:12.2px;line-height:12.2px;color:#E2DAEE;font-weight:400;letter-spacing:0px;transform:scaleX(0.9242);transform-origin:0 0;">OPPORTUNITIES</span>
<span class="t" style="left:573.55px;top:381.07px;font-size:12.2px;line-height:12.2px;color:#E2DAEE;font-weight:400;letter-spacing:0px;transform:scaleX(0.9180);transform-origin:0 0;">THREATS</span>
<div class="a" style="left:233.0px;top:403.1px;width:1.8px;height:1.8px;background:#D4CCE0"></div>
<span class="t" style="left:246.89px;top:399.74px;font-size:8.7px;line-height:8.7px;color:#DCD4E8;font-weight:400;letter-spacing:-0.2px;transform:scaleX(0.9030);transform-origin:0 0;">Strength One</span>
<div class="a" style="left:233.0px;top:412.20000000000005px;width:1.8px;height:1.8px;background:#D4CCE0"></div>
<span class="t" style="left:246.89px;top:408.84px;font-size:8.7px;line-height:8.7px;color:#DCD4E8;font-weight:400;letter-spacing:-0.2px;transform:scaleX(0.9030);transform-origin:0 0;">Strength Two</span>
<div class="a" style="left:233.0px;top:421.3px;width:1.8px;height:1.8px;background:#D4CCE0"></div>
<span class="t" style="left:246.89px;top:417.94px;font-size:8.7px;line-height:8.7px;color:#DCD4E8;font-weight:400;letter-spacing:-0.2px;transform:scaleX(0.9030);transform-origin:0 0;">Strength Three</span>
<div class="a" style="left:341.0px;top:403.1px;width:1.8px;height:1.8px;background:#D4CCE0"></div>
<span class="t" style="left:354.49px;top:399.74px;font-size:8.7px;line-height:8.7px;color:#DCD4E8;font-weight:400;letter-spacing:-0.2px;transform:scaleX(0.9030);transform-origin:0 0;">Weakness One</span>
<div class="a" style="left:341.0px;top:412.20000000000005px;width:1.8px;height:1.8px;background:#D4CCE0"></div>
<span class="t" style="left:354.49px;top:408.84px;font-size:8.7px;line-height:8.7px;color:#DCD4E8;font-weight:400;letter-spacing:-0.2px;transform:scaleX(0.9030);transform-origin:0 0;">Weakness Two</span>
<div class="a" style="left:341.0px;top:421.3px;width:1.8px;height:1.8px;background:#D4CCE0"></div>
<span class="t" style="left:354.49px;top:417.94px;font-size:8.7px;line-height:8.7px;color:#DCD4E8;font-weight:400;letter-spacing:-0.2px;transform:scaleX(0.9030);transform-origin:0 0;">Weakness Three</span>
<div class="a" style="left:448.8px;top:403.1px;width:1.8px;height:1.8px;background:#D4CCE0"></div>
<span class="t" style="left:462.59px;top:399.74px;font-size:8.7px;line-height:8.7px;color:#DCD4E8;font-weight:400;letter-spacing:-0.2px;transform:scaleX(0.9030);transform-origin:0 0;">Opportunities One</span>
<div class="a" style="left:448.8px;top:412.20000000000005px;width:1.8px;height:1.8px;background:#D4CCE0"></div>
<span class="t" style="left:462.59px;top:408.84px;font-size:8.7px;line-height:8.7px;color:#DCD4E8;font-weight:400;letter-spacing:-0.2px;transform:scaleX(0.9030);transform-origin:0 0;">Opportunities Two</span>
<div class="a" style="left:448.8px;top:421.3px;width:1.8px;height:1.8px;background:#D4CCE0"></div>
<span class="t" style="left:462.59px;top:417.94px;font-size:8.7px;line-height:8.7px;color:#DCD4E8;font-weight:400;letter-spacing:-0.2px;transform:scaleX(0.9030);transform-origin:0 0;">Opportunities Three</span>
<div class="a" style="left:556.3000000000001px;top:403.1px;width:1.8px;height:1.8px;background:#D4CCE0"></div>
<span class="t" style="left:570.49px;top:399.74px;font-size:8.7px;line-height:8.7px;color:#DCD4E8;font-weight:400;letter-spacing:-0.2px;transform:scaleX(0.9030);transform-origin:0 0;">Threats One</span>
<div class="a" style="left:556.3000000000001px;top:412.20000000000005px;width:1.8px;height:1.8px;background:#D4CCE0"></div>
<span class="t" style="left:570.49px;top:408.84px;font-size:8.7px;line-height:8.7px;color:#DCD4E8;font-weight:400;letter-spacing:-0.2px;transform:scaleX(0.9030);transform-origin:0 0;">Threats Two</span>
<div class="a" style="left:556.3000000000001px;top:421.3px;width:1.8px;height:1.8px;background:#D4CCE0"></div>
<span class="t" style="left:570.49px;top:417.94px;font-size:8.7px;line-height:8.7px;color:#DCD4E8;font-weight:400;letter-spacing:-0.2px;transform:scaleX(0.9030);transform-origin:0 0;">Threats Three</span>
<svg class="a" style="left:0;top:0" width="768" height="547"><path fill="none" stroke="#4E4262" stroke-width="1.6" stroke-linejoin="miter" d="M708.8 470.2L719.2 460.9L729.6 470.2"/><path fill="#4E4262" d="M711.8 471.2L719.2 464.4L726.6 471.2V478.5H720.8V472H717.6V478.5H711.8Z"/></svg>
<div class="a" style="left:136px;top:486px;width:150.5px;height:11px;background:#2A0A57"></div>
<div class="a" style="left:286.5px;top:486px;width:150px;height:11px;background:#3D1A6E"></div>
<div class="a" style="left:436.5px;top:486px;width:149.5px;height:11px;background:#5C3497"></div>
<div class="a" style="left:586px;top:486px;width:150px;height:11px;background:#7C52B3"></div>
<span class="t" style="left:195.61px;top:488.64px;font-size:6.1px;line-height:6.1px;color:#E8E4F0;font-weight:700;letter-spacing:0px;transform:scaleX(1.1775);transform-origin:0 0;">TAB ONE</span>
<span class="t" style="left:345.37px;top:488.64px;font-size:6.1px;line-height:6.1px;color:#E8E4F0;font-weight:700;letter-spacing:0px;transform:scaleX(1.1602);transform-origin:0 0;">TAB TWO</span>
<span class="t" style="left:491.22px;top:488.64px;font-size:6.1px;line-height:6.1px;color:#E8E4F0;font-weight:700;letter-spacing:0px;transform:scaleX(1.1640);transform-origin:0 0;">TAB THREE</span>
<span class="t" style="left:643.11px;top:488.64px;font-size:6.1px;line-height:6.1px;color:#E8E4F0;font-weight:700;letter-spacing:0px;transform:scaleX(1.1721);transform-origin:0 0;">TAB FOUR</span>
<span class="t" style="left:6.90px;top:530.73px;font-size:11.3px;line-height:11.3px;color:#555555;font-weight:400;letter-spacing:0px;transform:scaleX(0.8784);transform-origin:0 0;">Slide 16 of 17</span>
<span class="t" style="left:326.09px;top:530.73px;font-size:11.3px;line-height:11.3px;color:#555555;font-weight:400;letter-spacing:0px;transform:scaleX(0.9087);transform-origin:0 0;">Notes</span>
<span class="t" style="left:385.41px;top:530.73px;font-size:11.3px;line-height:11.3px;color:#555555;font-weight:400;letter-spacing:0px;transform:scaleX(0.8730);transform-origin:0 0;">Comments</span>
<div class="a" style="left:449.5px;top:527px;width:33.5px;height:19px;background:#CFCFCF"></div>
<svg class="a" style="left:0;top:0" width="768" height="547"><path fill="none" stroke="#6A6A6A" stroke-width="1" d="M85.9 531.2V540.3L91.6 539.2L97.3 540.3V536M85.9 531.2L91.6 532.3V539.2M91.6 532.3L94 531.5"/><path fill="none" stroke="#6A6A6A" stroke-width="1.1" d="M93.5 537L97.9 531.6L99 532.6L94.6 538.1L93 538.6Z"/><path fill="#6A6A6A" d="M314.3 533.8L316.6 531.2L318.9 533.8Z"/><path stroke="#6A6A6A" stroke-width="1" d="M312 535.6H321.9M312 537.7H321.9M312 539.8H321.9M314 541.8H319.8"/><path fill="#6A6A6A" d="M371.4 531.5H381.8V539H377.5L375.2 541.6V539H371.4Z"/><rect x="461" y="530.5" width="11.2" height="10.5" fill="none" stroke="#6A6A6A" stroke-width="1"/><path stroke="#6A6A6A" stroke-width="1" d="M463.5 531V540.8"/><rect x="465.5" y="532.5" width="4.5" height="3" fill="none" stroke="#6A6A6A" stroke-width="1"/><g fill="none" stroke="#6A6A6A" stroke-width="1"><rect x="494.7" y="531" width="4.4" height="4.2"/><rect x="501.3" y="531" width="4.4" height="4.2"/><rect x="494.7" y="537.2" width="4.4" height="4.2"/><rect x="501.3" y="537.2" width="4.4" height="4.2"/></g><path fill="none" stroke="#6A6A6A" stroke-width="1" d="M527.5 531V540.5H532.7L533.2 541.3L533.7 540.5H538.9V531H533.7L533.2 531.6L532.7 531Z M533.2 531.6V540.5"/><path stroke="#6A6A6A" stroke-width="0.8" d="M529 533.3H531.8M529 535.3H531.8M529 537.3H531.8M534.6 533.3H537.4M534.6 535.3H537.4M534.6 537.3H537.4"/><path fill="none" stroke="#6A6A6A" stroke-width="1" d="M561.3 530.8H572.6V533.8H561.3ZM562.6 533.8V535.6H571.3V533.8M566.95 535.6V541M564.6 541.2H569.3"/><path stroke="#6A6A6A" stroke-width="1.4" d="M588 536.2H593.3M688 536.2H695.8M691.9 532.3V540.1"/><path stroke="#A8A8A8" stroke-width="1" d="M597 536.5H685.5M641.5 533.8V539"/><rect x="618" y="531.2" width="3.8" height="9.4" fill="#6A6A6A"/><rect x="740.3" y="530.3" width="10.6" height="10.6" fill="none" stroke="#6A6A6A" stroke-width="1"/><path fill="#6A6A6A" d="M741.8 531.8H744.8L741.8 534.8Z M749.4 531.8H746.4L749.4 534.8Z M741.8 539.4H744.8L741.8 536.4Z M749.4 539.4H746.4L749.4 536.4Z"/><path stroke="#6A6A6A" stroke-width="0.8" d="M743 533L744.6 534.6M748.2 533L746.6 534.6M743 538.2L744.6 536.6M748.2 538.2L746.6 536.6"/></svg>
<span class="t" style="left:709.13px;top:530.73px;font-size:11.3px;line-height:11.3px;color:#555555;font-weight:400;letter-spacing:0px;transform:scaleX(0.8287);transform-origin:0 0;">54%</span>
<div class="a" style="left:767px;top:0px;width:1px;height:547px;background:#B7472A"></div>
<div class="a" style="left:0px;top:546px;width:768px;height:1px;background:#B7472A"></div>
<div class="a" style="left:0px;top:53px;width:1px;height:494px;background:#B7472A"></div>
</body></html>
